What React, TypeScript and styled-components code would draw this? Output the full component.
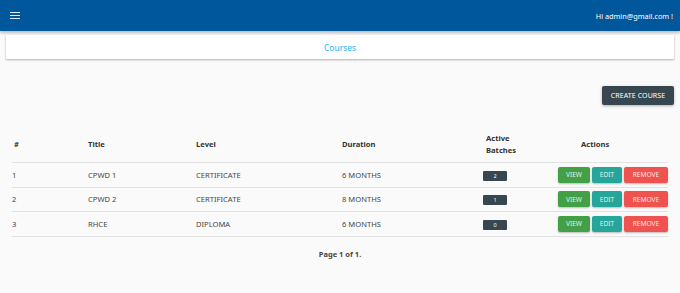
import React from "react";
import styled, { createGlobalStyle } from "styled-components";

const Global = createGlobalStyle`
  html, body { margin: 0; padding: 0; background: #fafafa; }
  body { font-family: "Noto Sans", "Open Sans", sans-serif; color: #444; }
  * { box-sizing: border-box; }
`;

const Page = styled.div`
  width: 680px;
  height: 293px;
  background: #fafafa;
  overflow: hidden;
`;

const TopBar = styled.header`
  height: 31px;
  background: #01579b;
  display: flex;
  align-items: center;
  justify-content: space-between;
  padding: 0 7px 0 10px;
  box-shadow: 0 2px 3px rgba(0, 0, 0, 0.25);
`;

const Burger = styled.div`
  width: 10px;
  display: flex;
  flex-direction: column;
  gap: 2px;
  span {
    display: block;
    height: 1.3px;
    background: #e3eef8;
  }
`;

const Greeting = styled.span`
  color: #fff;
  font-size: 7.3px;
`;

const TitleCard = styled.div`
  margin: 4px 6px 0;
  height: 24px;
  background: #fff;
  display: flex;
  align-items: center;
  justify-content: center;
  box-shadow: 0 1px 2px rgba(0, 0, 0, 0.3);
  color: #29b6f6;
  font-size: 8.5px;
`;

const ActionsBar = styled.div`
  display: flex;
  justify-content: flex-end;
  padding: 27px 6px 0;
`;

const CreateButton = styled.button`
  height: 19px;
  width: 72px;
  border: none;
  border-radius: 2px;
  background: #37474f;
  color: #fff;
  font-family: inherit;
  font-size: 7px;
  letter-spacing: 0.1px;
  padding: 0;
  box-shadow: 0 1px 3px rgba(0, 0, 0, 0.3);
`;

const Table = styled.div`
  margin: 21px 12px 0;
  width: 656px;
`;

const Row = styled.div<{ $head?: boolean }>`
  display: grid;
  grid-template-columns: 76px 108px 146px 144px 72px 110px;
  align-items: center;
  height: ${(p) => (p.$head ? "37px" : "24.5px")};
  border-bottom: 1px solid #e2e2e2;
  font-size: 7.6px;
  font-weight: ${(p) => (p.$head ? 700 : 400)};
  color: ${(p) => (p.$head ? "#333" : "#454545")};
`;

const Cell = styled.div<{ $pad?: number }>`
  padding-left: ${(p) => p.$pad ?? 0}px;
  line-height: 12px;
`;

const Badge = styled.span`
  display: inline-block;
  width: 24px;
  height: 10px;
  background: #37474f;
  color: #fff;
  border-radius: 1px;
  font-size: 5.5px;
  line-height: 10px;
  text-align: center;
  margin-left: -3px;
  vertical-align: middle;
`;

const Buttons = styled.div`
  display: flex;
  gap: 2px;
`;

const ActionBtn = styled.button<{ $bg: string; $w: number }>`
  height: 16px;
  width: ${(p) => p.$w}px;
  border: none;
  border-radius: 2px;
  background: ${(p) => p.$bg};
  color: rgba(255, 255, 255, 0.88);
  font-family: inherit;
  font-size: 6.6px;
  padding: 0;
  box-shadow: 0 1px 2px rgba(0, 0, 0, 0.25);
`;

const Pager = styled.div`
  text-align: center;
  margin-top: 12px;
  font-size: 7.5px;
  font-weight: 700;
  color: #444;
`;

const courses = [
  { id: 1, title: "CPWD 1", level: "CERTIFICATE", duration: "6 MONTHS", batches: 2 },
  { id: 2, title: "CPWD 2", level: "CERTIFICATE", duration: "8 MONTHS", batches: 1 },
  { id: 3, title: "RHCE", level: "DIPLOMA", duration: "6 MONTHS", batches: 0 },
];

export default function App() {
  return (
    <Page>
      <Global />
      <TopBar>
        <Burger>
          <span />
          <span />
          <span />
        </Burger>
        <Greeting>Hi admin@gmail.com !</Greeting>
      </TopBar>
      <TitleCard>Courses</TitleCard>
      <ActionsBar>
        <CreateButton>CREATE COURSE</CreateButton>
      </ActionsBar>
      <Table>
        <Row $head>
          <Cell $pad={2}>#</Cell>
          <Cell>Title</Cell>
          <Cell>Level</Cell>
          <Cell>Duration</Cell>
          <Cell>
            Active
            <br />
            Batches
          </Cell>
          <Cell $pad={23}>Actions</Cell>
        </Row>
        {courses.map((c) => (
          <Row key={c.id}>
            <Cell>{c.id}</Cell>
            <Cell $pad={-2}>{c.title}</Cell>
            <Cell $pad={-2}>{c.level}</Cell>
            <Cell $pad={-2}>{c.duration}</Cell>
            <Cell>
              <Badge>{c.batches}</Badge>
            </Cell>
            <Buttons>
              <ActionBtn $bg="#43a047" $w={32}>VIEW</ActionBtn>
              <ActionBtn $bg="#26a69a" $w={30}>EDIT</ActionBtn>
              <ActionBtn $bg="#ef5350" $w={44}>REMOVE</ActionBtn>
            </Buttons>
          </Row>
        ))}
      </Table>
      <Pager>Page 1 of 1.</Pager>
    </Page>
  );
}
